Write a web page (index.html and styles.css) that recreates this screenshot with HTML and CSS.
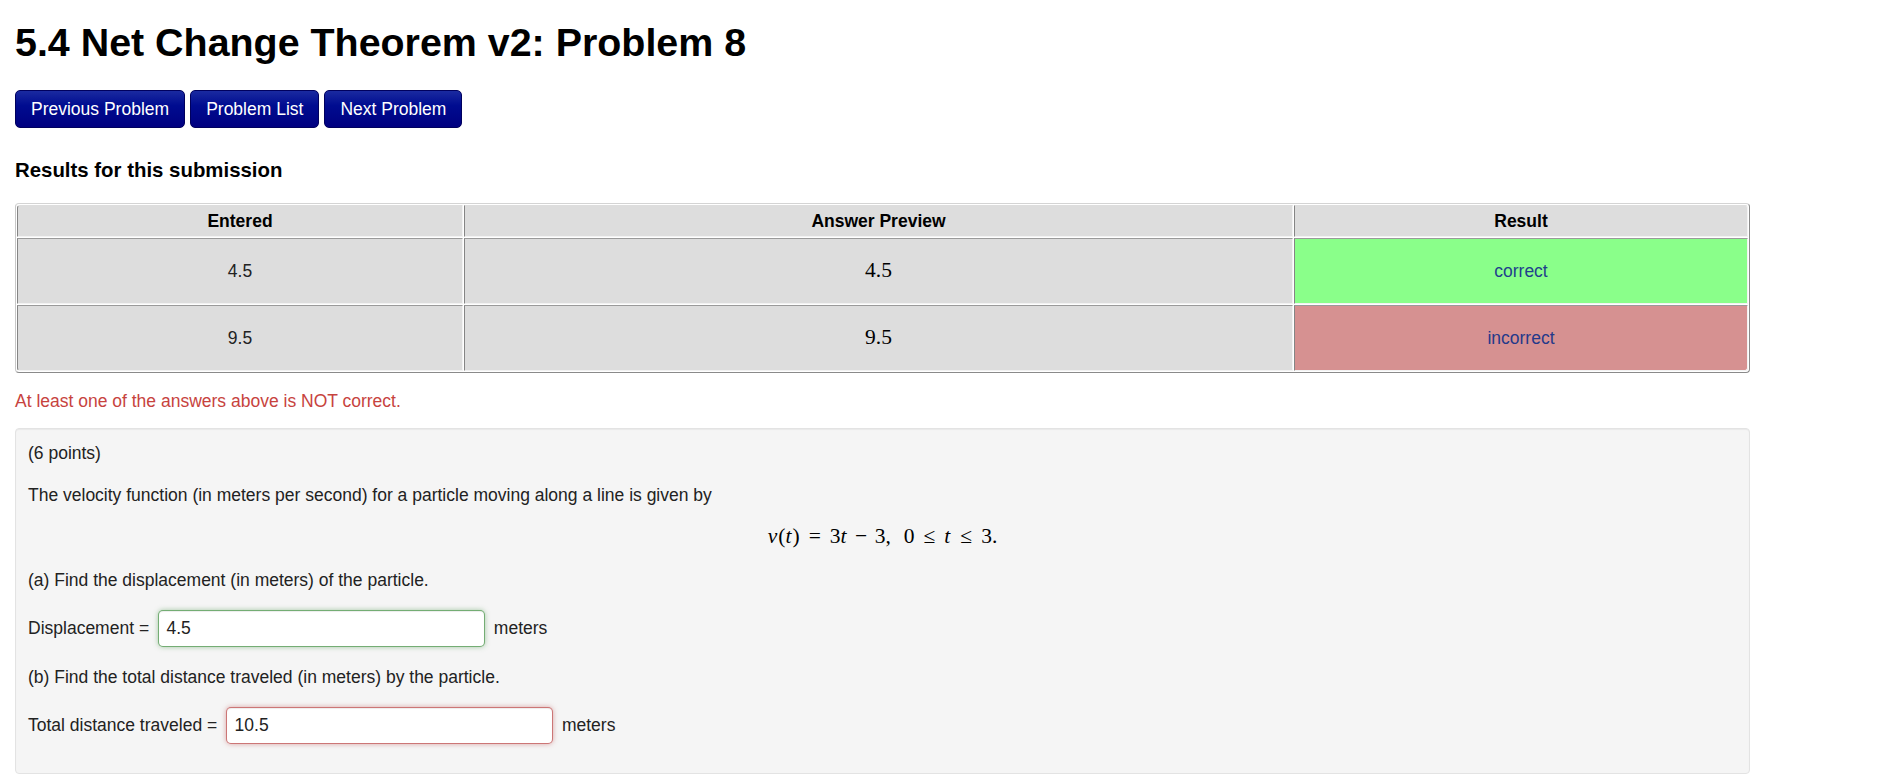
FILE: index.html
```html
<!DOCTYPE html>
<html lang="en">
<head>
    <meta charset="UTF-8">
    <meta name="viewport" content="width=device-width, initial-scale=1.0">
    <title>5.4 Net Change Theorem v2: Problem 8</title>
    <link rel="stylesheet" href="styles.css">
</head>
<body>
    <div class="page">
        <h1 class="problem-title">5.4 Net Change Theorem v2: Problem 8</h1>

        <div class="nav-buttons">
            <a class="nav-btn" href="#">Previous Problem</a>
            <a class="nav-btn" href="#">Problem List</a>
            <a class="nav-btn" href="#">Next Problem</a>
        </div>

        <h2 class="results-title">Results for this submission</h2>

        <table class="attempt-results">
            <thead>
                <tr>
                    <th class="col-entered">Entered</th>
                    <th class="col-preview">Answer Preview</th>
                    <th class="col-result">Result</th>
                </tr>
            </thead>
            <tbody>
                <tr>
                    <td>4.5</td>
                    <td class="preview"><span class="math">4.5</span></td>
                    <td class="result-correct">correct</td>
                </tr>
                <tr>
                    <td>9.5</td>
                    <td class="preview"><span class="math">9.5</span></td>
                    <td class="result-incorrect">incorrect</td>
                </tr>
            </tbody>
        </table>

        <p class="results-error">At least one of the answers above is NOT correct.</p>

        <div class="problem-body">
            <p>(6 points)</p>
            <p>The velocity function (in meters per second) for a particle moving along a line is given by</p>
            <div class="display-math">
                <span class="math"><i>v</i>(<i>t</i>)<span class="rel">=</span>3<i>t</i><span class="bin">&minus;</span>3,<span class="gap"></span>0<span class="rel">&le;</span><i>t</i><span class="rel">&le;</span>3.</span>
            </div>
            <p>(a) Find the displacement (in meters) of the particle.</p>
            <p class="answer-row">Displacement = <input class="answer correct" type="text" value="4.5"> meters</p>
            <p>(b) Find the total distance traveled (in meters) by the particle.</p>
            <p class="answer-row">Total distance traveled = <input class="answer incorrect" type="text" value="10.5"> meters</p>
        </div>
    </div>
</body>
</html>
```

FILE: styles.css
```css
body {
    margin: 0;
    font-family: "Liberation Sans", Arial, sans-serif;
    font-size: 17.5px;
    line-height: 25px;
    color: #222;
    background: #fff;
}

.page {
    width: 1735px;
    margin-left: 15px;
}

.problem-title {
    margin: 17px 0 0;
    font-size: 39.4px;
    line-height: 50px;
    font-weight: bold;
    color: #000;
}

.nav-buttons {
    display: flex;
    gap: 5px;
    margin-top: 23px;
}

.nav-btn {
    display: block;
    height: 38px;
    box-sizing: border-box;
    padding: 5px 15px;
    border: 1px solid #00005e;
    border-radius: 5px;
    background: linear-gradient(to bottom, #1a2aa0, #000c90 40%, #000080);
    color: #fff;
    font-size: 17.5px;
    line-height: 26px;
    text-decoration: none;
}

.results-title {
    margin: 30px 0 0;
    font-size: 20.4px;
    line-height: 25px;
    font-weight: bold;
    color: #000;
}

.attempt-results {
    width: 100%;
    margin-top: 20px;
    table-layout: fixed;
    border-collapse: separate;
    border-spacing: 1px;
    border: 1px solid;
    border-color: #d4d4d4 #8a8a8a #8a8a8a #c8c8c8;
    border-radius: 4px;
}

.attempt-results th,
.attempt-results td {
    box-sizing: border-box;
    text-align: center;
    background: #ddd;
    border: 1px solid;
    border-color: #9a9a9a #f2f2f2 #f2f2f2 #858585;
}

.attempt-results th {
    padding: 2.5px 6px;
    font-weight: bold;
    color: #000;
    border-top-color: #ddd;
}

.attempt-results td {
    padding: 19px 6px;
}

.col-entered { width: 446px; }
.col-preview { width: 829px; }

.attempt-results thead th:first-child { border-top-left-radius: 3px; }
.attempt-results thead th:last-child { border-top-right-radius: 3px; }
.attempt-results tbody tr:last-child td:first-child { border-bottom-left-radius: 3px; }
.attempt-results tbody tr:last-child td:last-child { border-bottom-right-radius: 3px; }

.result-correct {
    color: #213f8c;
}

.attempt-results td.result-correct {
    background: #8aff8a;
}

.result-incorrect {
    color: #25398a;
}

.attempt-results td.result-incorrect {
    background: #d69191;
}

.math {
    font-family: "Liberation Serif", "Times New Roman", serif;
    font-size: 21.5px;
    color: #000;
    white-space: nowrap;
}

.math i {
    font-style: italic;
    padding-right: 1px;
}

.math .rel {
    padding: 0 9px;
}

.math .bin {
    padding: 0 7.5px;
}

.math .gap {
    display: inline-block;
    width: 13px;
}

.results-error {
    margin: 15.5px 0 0;
    color: #c7433e;
}

.problem-body {
    margin-top: 14.5px;
    padding: 11.5px 12px 12.5px;
    background: #f5f5f5;
    border: 1px solid #e3e3e3;
    border-radius: 4px;
    box-shadow: inset 0 1px 1px rgba(0, 0, 0, 0.05);
}

.problem-body p {
    margin: 0 0 17px;
}

.display-math {
    text-align: center;
    line-height: 22px;
    margin: 0 0 20px;
}

.problem-body .answer-row {
    margin-bottom: 18px;
}

.problem-body .answer-row:last-child {
    margin-bottom: 17px;
}

.answer {
    box-sizing: border-box;
    width: 327px;
    height: 37px;
    margin: 0 4px;
    padding: 5px 7.5px;
    font-family: "Liberation Sans", Arial, sans-serif;
    font-size: 17.5px;
    line-height: 25px;
    color: #222;
    background: #fff;
    border: 1px solid #ccc;
    border-radius: 5px;
    outline: none;
}

.answer.correct {
    border-color: rgba(81, 153, 81, 0.8);
    box-shadow: inset 0 1px 1px rgba(0, 0, 0, 0.075), 0 0 5px rgba(81, 153, 81, 0.5);
}

.answer.incorrect {
    border-color: rgba(191, 84, 84, 0.8);
    box-shadow: inset 0 1px 1px rgba(0, 0, 0, 0.075), 0 0 5px rgba(191, 84, 84, 0.5);
}
```
